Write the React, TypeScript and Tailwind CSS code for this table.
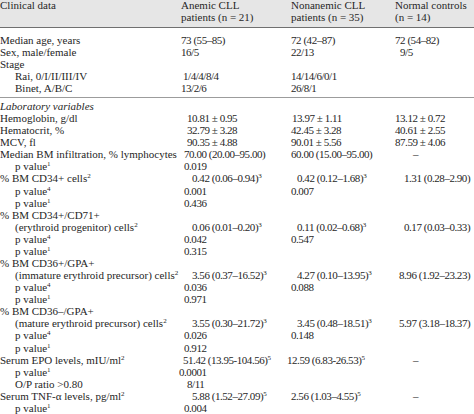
import React from "react";

type Cell = { t: React.ReactNode; c?: string };
type Row = { label: React.ReactNode; indent?: boolean; italic?: boolean; v?: (Cell | null)[] };

const Sup = ({ n }: { n: string }) => (
  <span className="relative -top-[4px] text-[7px] leading-none tracking-normal">{n}</span>
);

const top: Row[] = [
  { label: "Median age, years", v: [{ t: "73 (55–85)" }, { t: "72 (42–87)" }, { t: "72 (54–82)" }] },
  { label: "Sex, male/female", v: [{ t: "16/5" }, { t: "22/13" }, { t: "9/5", c: "pl-[5px]" }] },
  { label: "Stage" },
  { label: "Rai, 0/I/II/III/IV", indent: true, v: [{ t: "1/4/4/8/4", c: "pl-[2px]" }, { t: "14/14/6/0/1" }, null] },
  { label: "Binet, A/B/C", indent: true, v: [{ t: "13/2/6" }, { t: "26/8/1" }, null] },
];

const pv = (n: string, a: string, b?: string, ac = "pl-[3px]"): Row => ({
  label: (
    <>
      p value<Sup n={n} />
    </>
  ),
  indent: true,
  v: [{ t: a, c: ac }, b ? { t: b } : null, null],
});

const lab: Row[] = [
  { label: "Laboratory variables", italic: true },
  { label: "Hemoglobin, g/dl", v: [{ t: "10.81 ± 0.95", c: "pl-[6px]" }, { t: "13.97 ± 1.11", c: "pl-[1px]" }, { t: "13.12 ± 0.72" }] },
  { label: "Hematocrit, %", v: [{ t: "32.79 ± 3.28", c: "pl-[6px]" }, { t: "42.45 ± 3.28" }, { t: "40.61 ± 2.55" }] },
  { label: "MCV, fl", v: [{ t: "90.35 ± 4.88", c: "pl-[6px]" }, { t: "90.01 ± 5.56" }, { t: "87.59 ± 4.06" }] },
  {
    label: "Median BM infiltration, % lymphocytes",
    v: [{ t: "70.00 (20.00–95.00)", c: "pl-[3px]" }, { t: "60.00 (15.00–95.00)" }, { t: "–", c: "pl-[18px]" }],
  },
  pv("1", "0.019"),
  {
    label: (
      <>
        % BM CD34+ cells<Sup n="2" />
      </>
    ),
    v: [
      { t: <>0.42 (0.06–0.94)<Sup n="3" /></>, c: "pl-[11px]" },
      { t: <>0.42 (0.12–1.68)<Sup n="3" /></>, c: "pl-[6px]" },
      { t: "1.31 (0.28–2.90)", c: "pl-[9px]" },
    ],
  },
  pv("4", "0.001", "0.007"),
  pv("1", "0.436"),
  { label: "% BM CD34+/CD71+" },
  {
    label: (
      <>
        (erythroid progenitor) cells<Sup n="2" />
      </>
    ),
    indent: true,
    v: [
      { t: <>0.06 (0.01–0.20)<Sup n="3" /></>, c: "pl-[11px]" },
      { t: <>0.11 (0.02–0.68)<Sup n="3" /></>, c: "pl-[6px]" },
      { t: "0.17 (0.03–0.33)", c: "pl-[9px]" },
    ],
  },
  pv("4", "0.042", "0.547"),
  pv("1", "0.315"),
  { label: "% BM CD36+/GPA+" },
  {
    label: (
      <>
        (immature erythroid precursor) cells<Sup n="2" />
      </>
    ),
    indent: true,
    v: [
      { t: <>3.56 (0.37–16.52)<Sup n="3" /></>, c: "pl-[11px]" },
      { t: <>4.27 (0.10–13.95)<Sup n="3" /></>, c: "pl-[6px]" },
      { t: "8.96 (1.92–23.23)", c: "pl-[4px]" },
    ],
  },
  pv("4", "0.036", "0.088"),
  pv("1", "0.971"),
  { label: "% BM CD36–/GPA+" },
  {
    label: (
      <>
        (mature erythroid precursor) cells<Sup n="2" />
      </>
    ),
    indent: true,
    v: [
      { t: <>3.55 (0.30–21.72)<Sup n="3" /></>, c: "pl-[11px]" },
      { t: <>3.45 (0.48–18.51)<Sup n="3" /></>, c: "pl-[6px]" },
      { t: "5.97 (3.18–18.37)", c: "pl-[4px]" },
    ],
  },
  pv("4", "0.026", "0.148"),
  pv("1", "0.912"),
  {
    label: (
      <>
        Serum EPO levels, mIU/ml<Sup n="2" />
      </>
    ),
    v: [
      { t: <>51.42 (13.95-104.56)<Sup n="5" /></>, c: "pl-[2px]" },
      { t: <>12.59 (6.83-26.53)<Sup n="5" /></>, c: "-ml-[4px]" },
      { t: "–", c: "pl-[18px]" },
    ],
  },
  pv("1", "0.0001", undefined, "-ml-[2px]"),
  { label: "O/P ratio >0.80", indent: true, v: [{ t: "8/11", c: "pl-[6px]" }, null, null] },
  {
    label: (
      <>
        Serum TNF-α levels, pg/ml<Sup n="2" />
      </>
    ),
    v: [
      { t: <>5.88 (1.52–27.09)<Sup n="5" /></>, c: "pl-[11px]" },
      { t: <>2.56 (1.03–4.55)<Sup n="5" /></> },
      { t: "–", c: "pl-[18px]" },
    ],
  },
  pv("1", "0.004"),
];

function Rows({ rows, lh }: { rows: Row[]; lh: string }) {
  return (
    <>
      {rows.map((r, i) => (
        <div key={i} className={`grid grid-cols-[181px_110px_104px_1fr] whitespace-nowrap ${lh}`}>
          <div className={`${r.indent ? "pl-[15px]" : ""} ${r.italic ? "italic" : ""}`}>{r.label}</div>
          {[0, 1, 2].map((k) => {
            const c = r.v?.[k];
            return (
              <div key={k} className={`tracking-[-0.45px] ${c?.c ?? ""}`}>
                {c ? c.t : ""}
              </div>
            );
          })}
        </div>
      ))}
    </>
  );
}

export default function App() {
  return (
    <div className="w-[474px] h-[414px] overflow-hidden bg-white text-[#262626] font-['Liberation_Serif',serif] text-[11px]">
      <div className="h-[28px] bg-[#e6e6e6] border-b border-[#707070] leading-[11.5px]">
        <div className="grid grid-cols-[181px_110px_104px_1fr] whitespace-nowrap">
          <div>Clinical data</div>
          <div>Anemic CLL</div>
          <div>Nonanemic CLL</div>
          <div>Normal controls</div>
          <div></div>
          <div>patients (n = 21)</div>
          <div>patients (n = 35)</div>
          <div>(n = 14)</div>
        </div>
      </div>
      <div className="pt-[6px] pb-[3px] border-b border-[#9c9c9c]">
        <Rows rows={top} lh="h-[12px] leading-[12px]" />
      </div>
      <div className="pt-[2px]">
        <Rows rows={lab} lh="h-[12.08px] leading-[12.08px]" />
      </div>
    </div>
  );
}
